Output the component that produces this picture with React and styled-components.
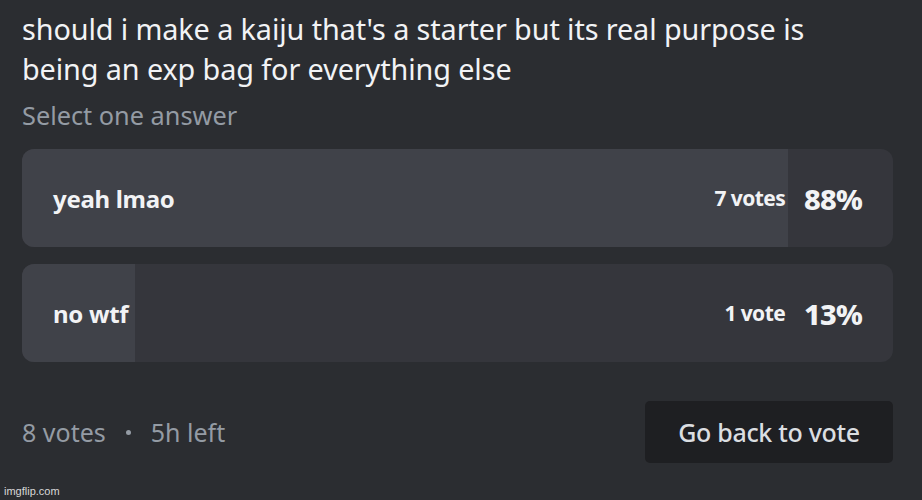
import styled, { createGlobalStyle } from "styled-components";

const GlobalStyle = createGlobalStyle`
  html, body {
    margin: 0;
    padding: 0;
    background: #2b2d31;
  }
  body {
    font-family: "Noto Sans", "Open Sans", sans-serif;
  }
`;

const Page = styled.div`
  position: relative;
  width: 922px;
  height: 500px;
  box-sizing: border-box;
  padding: 9px 29px 0 22px;
  background: #2b2d31;
  overflow: hidden;
`;

const Question = styled.h1`
  margin: 0;
  font-size: 28.8px;
  font-weight: 400;
  line-height: 40px;
  color: #f2f3f5;
  letter-spacing: -0.1px;
`;

const Hint = styled.div`
  margin-top: 10px;
  font-size: 25.3px;
  line-height: 32px;
  color: #949ba4;
`;

const Options = styled.ul`
  list-style: none;
  margin: 18px 0 0;
  padding: 0;
  display: flex;
  flex-direction: column;
  gap: 17px;
`;

const Option = styled.li`
  position: relative;
  height: 98px;
  border-radius: 12px;
  background: #35363c;
  overflow: hidden;
  display: flex;
  align-items: center;
  padding: 0 31px 0 31px;
`;

const Fill = styled.div`
  position: absolute;
  left: 0;
  top: 0;
  bottom: 0;
  background: #404249;
`;

const Label = styled.span`
  position: relative;
  font-size: 24px;
  font-weight: 700;
  color: #f2f3f5;
  letter-spacing: -0.3px;
`;

const Stats = styled.div`
  position: relative;
  margin-left: auto;
  display: flex;
  align-items: center;
  gap: 19px;
`;

const Votes = styled.span`
  font-size: 21px;
  font-weight: 700;
  color: #f2f3f5;
  letter-spacing: -0.6px;
`;

const Percent = styled.span`
  font-size: 29px;
  font-weight: 800;
  color: #f2f3f5;
  letter-spacing: -0.8px;
`;

const Footer = styled.div`
  margin-top: 39px;
  display: flex;
  align-items: center;
  justify-content: space-between;
`;

const Meta = styled.div`
  display: flex;
  align-items: center;
  gap: 20px;
  font-size: 25px;
  color: #949ba4;
`;

const Dot = styled.span`
  width: 5px;
  height: 5px;
  border-radius: 50%;
  background: #949ba4;
`;

const BackButton = styled.button`
  width: 248px;
  height: 62px;
  border: none;
  border-radius: 5px;
  background: #1e1f22;
  color: #dbdee1;
  font-family: inherit;
  font-size: 25px;
  font-weight: 500;
  letter-spacing: -0.3px;
  cursor: pointer;
`;

const Watermark = styled.span`
  position: absolute;
  left: 4px;
  bottom: 3px;
  font-family: "Liberation Sans", Arial, sans-serif;
  font-size: 11px;
  color: #d8d8d8;
`;

const answers = [
  { text: "yeah lmao", votes: "7 votes", pct: 88 },
  { text: "no wtf", votes: "1 vote", pct: 13 },
];

export default function App() {
  return (
    <>
      <GlobalStyle />
      <Page>
        <Question>
          should i make a kaiju that's a starter but its real purpose is
          <br />
          being an exp bag for everything else
        </Question>
        <Hint>Select one answer</Hint>
        <Options>
          {answers.map((a) => (
            <Option key={a.text}>
              <Fill style={{ width: `${a.pct}%` }} />
              <Label>{a.text}</Label>
              <Stats>
                <Votes>{a.votes}</Votes>
                <Percent>{a.pct}%</Percent>
              </Stats>
            </Option>
          ))}
        </Options>
        <Footer>
          <Meta>
            <span>8 votes</span>
            <Dot />
            <span>5h left</span>
          </Meta>
          <BackButton>Go back to vote</BackButton>
        </Footer>
        <Watermark>imgflip.com</Watermark>
      </Page>
    </>
  );
}
